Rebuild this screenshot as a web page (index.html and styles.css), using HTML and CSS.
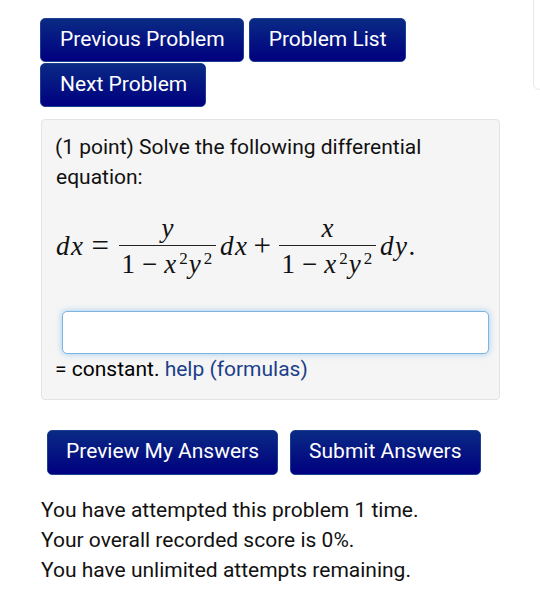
FILE: index.html
```html
<!DOCTYPE html>
<html lang="en">
<head>
<meta charset="utf-8">
<title>Problem</title>
<link rel="stylesheet" href="styles.css">
</head>
<body>
<div class="corner"></div>
<main class="page">
  <nav class="nav">
    <a class="btn btn-prev">Previous Problem</a>
    <a class="btn btn-list">Problem List</a>
    <a class="btn btn-next">Next Problem</a>
  </nav>
  <section class="well">
    <p class="intro">(1 point) Solve the following differential equation:</p>
    <div class="math">
      <i class="v">dx</i><span class="op eq">=</span>
      <span class="frac"><span class="num"><i>y</i></span><span class="den">1<span class="minus">−</span><i>x</i><sup>2</sup><i>y</i><sup>2</sup></span></span>
      <i class="v">dx</i><span class="op">+</span>
      <span class="frac"><span class="num"><i>x</i></span><span class="den">1<span class="minus">−</span><i>x</i><sup>2</sup><i>y</i><sup>2</sup></span></span>
      <i class="v">dy</i><span class="dot">.</span>
    </div>
    <input class="answer" type="text" aria-label="answer">
    <p class="after">= constant. <a class="help">help (formulas)</a></p>
  </section>
  <div class="actions">
    <a class="btn">Preview My Answers</a>
    <a class="btn">Submit Answers</a>
  </div>
  <div class="status">
    <p>You have attempted this problem 1 time.</p>
    <p>Your overall recorded score is 0%.</p>
    <p>You have unlimited attempts remaining.</p>
  </div>
</main>
</body>
</html>
```
FILE: styles.css
```css
* { box-sizing: border-box; }
html, body { margin: 0; background: #fff; }
body { width: 540px; height: 612px; overflow: hidden; position: relative; font-family: Roboto, sans-serif; font-size: 21px; color: #111; }
.corner { position: absolute; right: -8px; top: -10px; width: 15px; height: 100px; border: 1px solid #e8e8e8; border-radius: 6px; }
.page { padding: 18px 40px 0; width: 540px; }
.nav { display: flex; flex-wrap: wrap; gap: 1px 5px; width: 400px; }
.btn { display: block; height: 44px; line-height: 41px; padding: 0 18px 0 19px; color: #fff; white-space: nowrap; border: 1px solid #1d3f8f; border-radius: 5px; background: linear-gradient(#0a2a85, #00007f); }
.well { margin-top: 12px; height: 281px; width: 459px; margin-left: 1px; padding: 12px 15px 0 14px; background: #f5f5f5; border: 1px solid #e3e3e3; border-radius: 4px; }
.intro { margin: 0; line-height: 30px; text-indent: -1px; }
.math { display: flex; align-items: center; margin-top: 20px; height: 68px; font-family: "Liberation Serif", serif; font-size: 27px; color: #111; }
.v { font-style: italic; letter-spacing: 1.5px; }
.op { margin: 0 8px 0 5px; font-size: 31px; }
.eq { margin: 0 10px 0 7px; }
.frac { display: inline-flex; flex-direction: column; align-items: center; width: 97px; margin-right: 4px; }
.num { height: 33px; line-height: 30px; border-bottom: 1px solid #222; width: 100%; text-align: center; }
.den { height: 34px; line-height: 37px; white-space: nowrap; }
.den i { letter-spacing: 2px; }
.den sup { font-size: 17px; line-height: 0; vertical-align: 9px; margin: 0 1px; }
.minus { margin: 0 7px; }
.answer { display: block; width: 427px; height: 43px; margin: 31px 0 0 6px; background: #fff; border: 1px solid #7fb4e0; border-radius: 5px; box-shadow: 0 0 6px rgba(82, 168, 236, .55); outline: none; }
.after { margin: 0 0 0 -1px; line-height: 30px; color: #000; }
.help { color: #1b3f8a; }
.actions { display: flex; gap: 12px; margin: 30px 0 0 7px; }
.actions .btn { height: 45px; padding: 0 18px; }
.status { margin: 20px 0 0 1px; }
.status p { margin: 0; line-height: 30px; }
```
